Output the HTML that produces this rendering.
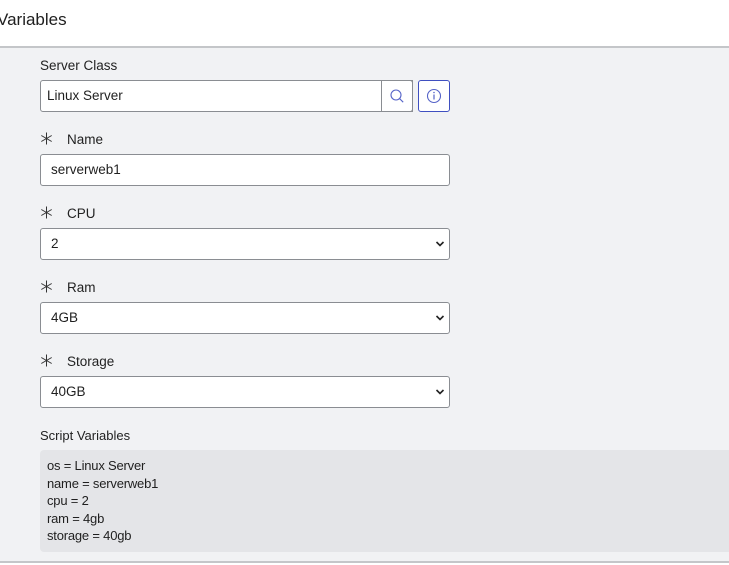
<!DOCTYPE html>
<html><head><style>
*{box-sizing:border-box;margin:0;padding:0}
body{width:729px;height:565px;background:#fff;font-family:"Liberation Sans",sans-serif;color:#1f1f1f;position:relative;overflow:hidden}
.hdr{position:absolute;left:0;top:0;width:729px;height:46px;font-size:17px;padding:10px 0 0 0;left:-3px}
.main{position:absolute;left:0;top:46px;width:729px;height:517px;background:#f1f2f4;border-top:2px solid #c4c6c9;border-bottom:2px solid #c4c6c9}
.lbl{position:absolute;left:40px;font-size:13.5px;color:#222}
.lbl svg{display:inline-block;vertical-align:-1px;margin-right:14px}
.inp{position:absolute;left:40px;width:410px;height:32px;background:#fff;border:1px solid #8a8d92;border-radius:3px;font-size:13.5px;padding:0 10px;line-height:30px}
.inp .chev{position:absolute;right:4px;top:11px}
.btn{position:absolute;top:80px;height:32px;background:#fff;border:1px solid #8a8d92;border-radius:3px}
.box{position:absolute;left:40px;top:402px;width:689px;height:102px;background:#e4e5e8;border-radius:4px 0 0 4px;font-size:13px;line-height:17.5px;padding:7px 7px;letter-spacing:-0.2px}
</style></head><body>
<div class="hdr">Variables</div>
<div class="main">
<div class="lbl" style="top:10px">Server Class</div>
<div class="inp" style="top:32px;width:373px;border-radius:3px 0 0 3px;padding-left:6px">Linux Server</div>
<div class="btn" style="left:381px;top:32px;width:32px;border-radius:0 3px 3px 0"><svg width="30" height="30" viewBox="0 0 30 30"><circle cx="14" cy="14" r="5" fill="none" stroke="#5563c8" stroke-width="1.1"/><path d="M17.6 17.6l3.6 3.6" stroke="#5563c8" stroke-width="1.1"/></svg></div>
<div class="btn" style="left:418px;top:32px;width:32px;border-color:#3f4fc0"><svg width="30" height="30" viewBox="0 0 30 30"><circle cx="15" cy="15" r="6.5" fill="none" stroke="#5563c8" stroke-width="1.1"/><path d="M15 13.5v5" stroke="#5563c8" stroke-width="1.2"/><circle cx="15" cy="11.5" r="0.8" fill="#5563c8"/></svg></div>

<div class="lbl" style="top:84px"><svg width="13" height="13" viewBox="0 0 13 13"><path d="M6.5 0.5v12M1.3 3.5l10.4 6M1.3 9.5l10.4-6" stroke="#333" stroke-width="1"/></svg>Name</div>
<div class="inp" style="top:106px">serverweb1</div>

<div class="lbl" style="top:158px"><svg width="13" height="13" viewBox="0 0 13 13"><path d="M6.5 0.5v12M1.3 3.5l10.4 6M1.3 9.5l10.4-6" stroke="#333" stroke-width="1"/></svg>CPU</div>
<div class="inp" style="top:180px">2<svg class="chev" width="10" height="8" viewBox="0 0 10 8"><path d="M1.5 2l3.5 3.5 3.5-3.5" fill="none" stroke="#222" stroke-width="1.6"/></svg></div>

<div class="lbl" style="top:232px"><svg width="13" height="13" viewBox="0 0 13 13"><path d="M6.5 0.5v12M1.3 3.5l10.4 6M1.3 9.5l10.4-6" stroke="#333" stroke-width="1"/></svg>Ram</div>
<div class="inp" style="top:254px">4GB<svg class="chev" width="10" height="8" viewBox="0 0 10 8"><path d="M1.5 2l3.5 3.5 3.5-3.5" fill="none" stroke="#222" stroke-width="1.6"/></svg></div>

<div class="lbl" style="top:306px"><svg width="13" height="13" viewBox="0 0 13 13"><path d="M6.5 0.5v12M1.3 3.5l10.4 6M1.3 9.5l10.4-6" stroke="#333" stroke-width="1"/></svg>Storage</div>
<div class="inp" style="top:328px">40GB<svg class="chev" width="10" height="8" viewBox="0 0 10 8"><path d="M1.5 2l3.5 3.5 3.5-3.5" fill="none" stroke="#222" stroke-width="1.6"/></svg></div>

<div class="lbl" style="top:380px;font-size:13px">Script Variables</div>
<div class="box">os = Linux Server<br>name = serverweb1<br>cpu = 2<br>ram = 4gb<br>storage = 40gb</div>
</div>
</body></html>
